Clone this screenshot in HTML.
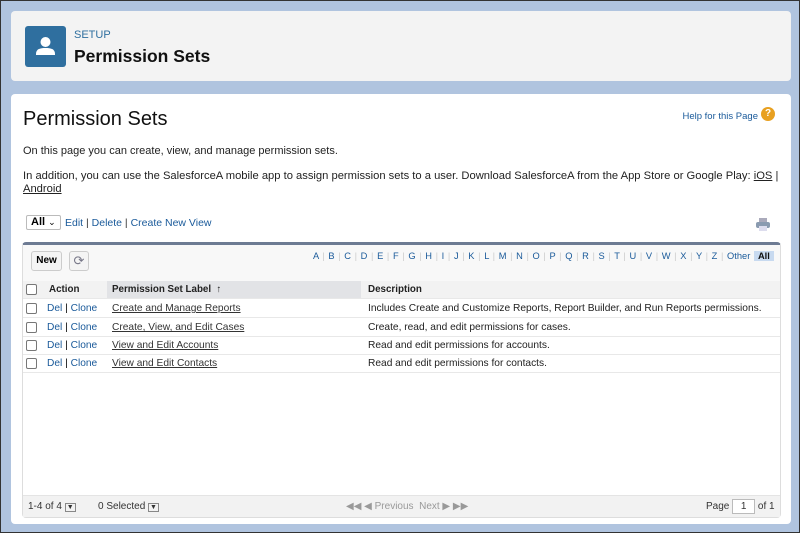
<!DOCTYPE html>
<html><head><style>
*{margin:0;padding:0;box-sizing:border-box}
body{width:800px;height:533px;background:#b0c4df;font-family:"Liberation Sans",Arial,sans-serif;position:relative;overflow:hidden;border:1px solid #333}
a{color:#1a5a9a;text-decoration:none}
.hdr{position:absolute;left:10px;top:10px;width:780px;height:70px;background:#f3f3f3;border-radius:4px}
.ico{position:absolute;left:14px;top:15px;width:41px;height:41px;background:#2f6f9f;border-radius:3px}
.main{position:absolute;left:10px;top:93px;width:780px;height:430px;background:#fff;border-radius:4px}
.t{position:absolute;white-space:nowrap}
.tbl{position:absolute;left:11px;top:148px;width:759px;height:276px;border:1px solid #ddd;border-top:3px solid #6d7b93;border-radius:4px;background:#fff}
.row{position:absolute;left:0;width:757px;height:18px;border-bottom:1px solid #e8e8e8;font-size:10.2px}
.cb{position:absolute;left:3px;width:11px;height:11px;border:1px solid #777;border-radius:2px;background:#fff}
.u{color:#333;text-decoration:underline}
.s{color:#ccc}
</style></head><body>
<div class="hdr">
 <div class="ico"><svg width="41" height="41"><circle cx="20.5" cy="16" r="5" fill="#fff"/><path d="M11 28c0-5 4-6 9.5-6s9.5 1 9.5 6v1H11z" fill="#fff"/></svg></div>
 <div class="t" style="left:63px;top:18px;font-size:11px;color:#2f6f9f">SETUP</div>
 <div class="t" style="left:63px;top:35px;font-size:17.5px;font-weight:bold;color:#111">Permission Sets</div>
</div>
<div class="main">
 <div class="t" style="left:12px;top:14px;font-size:20px;color:#111">Permission Sets</div>
 <div class="t" style="right:33px;top:17px;font-size:9.5px;color:#1a5a9a">Help for this Page</div>
 <div style="position:absolute;left:750px;top:13px;width:14px;height:14px;border-radius:50%;background:#e8a020;color:#fff;font-size:10px;font-weight:bold;text-align:center;line-height:14px">?</div>
 <div class="t" style="left:12px;top:51px;font-size:11px;color:#222">On this page you can create, view, and manage permission sets.</div>
 <div class="t" style="left:12px;top:76px;font-size:11.2px;color:#222">In addition, you can use the SalesforceA mobile app to assign permission sets to a user. Download SalesforceA from the App Store or Google Play: <span style="text-decoration:underline">iOS</span> |</div>
 <div class="t" style="left:12px;top:89px;font-size:11.2px;color:#222;text-decoration:underline">Android</div>
 <div style="position:absolute;left:15px;top:121px;width:35px;height:15px;border:1px solid #bbb;border-radius:2px;font-size:11px;font-weight:bold;padding-left:4px;line-height:13px">All <span style="font-weight:normal;font-size:9px">&#8964;</span></div>
 <div class="t" style="left:54px;top:123px;font-size:10.5px;color:#333"><a>Edit</a> | <a>Delete</a> | <a>Create New View</a></div>
 <svg style="position:absolute;left:744px;top:123px" width="16" height="15"><rect x="4" y="1" width="8" height="4" fill="#aab"/><rect x="1" y="5" width="14" height="6" rx="2" fill="#8a9bb0"/><rect x="4" y="9" width="8" height="5" fill="#dde"/></svg>
 <div class="tbl">
  <div style="position:absolute;left:0;top:0;width:757px;height:36px;background:#f8f8f8"></div>
  <div style="position:absolute;left:8px;top:6px;width:31px;height:20px;border:1px solid #ccc;border-radius:3px;background:#f4f4f4;font-size:10px;font-weight:bold;text-align:center;line-height:18px">New</div>
  <div style="position:absolute;left:46px;top:6px;width:20px;height:20px;border:1px solid #ccc;border-radius:3px;background:#f4f4f4;color:#778;font-size:13px;text-align:center;line-height:18px">&#10227;</div>
  <div class="t" style="left:290px;top:6px;font-size:9.3px;color:#1a5a9a;word-spacing:1.05px">A <span class="s">|</span> B <span class="s">|</span> C <span class="s">|</span> D <span class="s">|</span> E <span class="s">|</span> F <span class="s">|</span> G <span class="s">|</span> H <span class="s">|</span> I <span class="s">|</span> J <span class="s">|</span> K <span class="s">|</span> L <span class="s">|</span> M <span class="s">|</span> N <span class="s">|</span> O <span class="s">|</span> P <span class="s">|</span> Q <span class="s">|</span> R <span class="s">|</span> S <span class="s">|</span> T <span class="s">|</span> U <span class="s">|</span> V <span class="s">|</span> W <span class="s">|</span> X <span class="s">|</span> Y <span class="s">|</span> Z <span class="s">|</span> Other <span style="background:#c8daf0;color:#111;font-weight:bold;padding:0 4px">All</span></div>
  <div class="row" style="top:36px;background:#f2f2f2;font-weight:bold;font-size:9.8px;color:#222">
   <div class="cb" style="top:3px"></div>
   <div class="t" style="left:26px;top:3px">Action</div>
   <div style="position:absolute;left:84px;top:0;width:254px;height:17px;background:#e2e3e6"></div>
   <div class="t" style="left:89px;top:3px">Permission Set Label &nbsp;↑</div>
   <div class="t" style="left:345px;top:3px">Description</div>
  </div>
  <div class="row" style="top:55px"><div class="cb" style="top:3px"></div><div class="t" style="left:24px;top:3px"><a>Del</a> | <a>Clone</a></div><div class="t u" style="left:89px;top:3px">Create and Manage Reports</div><div class="t" style="left:345px;top:3px;color:#222">Includes Create and Customize Reports, Report Builder, and Run Reports permissions.</div></div>
  <div class="row" style="top:74px"><div class="cb" style="top:3px"></div><div class="t" style="left:24px;top:3px"><a>Del</a> | <a>Clone</a></div><div class="t u" style="left:89px;top:3px">Create, View, and Edit Cases</div><div class="t" style="left:345px;top:3px;color:#222">Create, read, and edit permissions for cases.</div></div>
  <div class="row" style="top:92px"><div class="cb" style="top:3px"></div><div class="t" style="left:24px;top:3px"><a>Del</a> | <a>Clone</a></div><div class="t u" style="left:89px;top:3px">View and Edit Accounts</div><div class="t" style="left:345px;top:3px;color:#222">Read and edit permissions for accounts.</div></div>
  <div class="row" style="top:110px"><div class="cb" style="top:3px"></div><div class="t" style="left:24px;top:3px"><a>Del</a> | <a>Clone</a></div><div class="t u" style="left:89px;top:3px">View and Edit Contacts</div><div class="t" style="left:345px;top:3px;color:#222">Read and edit permissions for contacts.</div></div>
  <div style="position:absolute;left:0;top:250px;width:757px;height:22px;background:#f2f2f2;border-top:1px solid #e4e4e4;font-size:10px;color:#333">
   <div class="t" style="left:5px;top:5px">1-4 of 4 <span style="border:1px solid #888;font-size:7px;padding:0 1px">▼</span></div>
   <div class="t" style="left:75px;top:5px">0 Selected <span style="border:1px solid #888;font-size:7px;padding:0 1px">▼</span></div>
   <div class="t" style="left:323px;top:5px;color:#999">◀◀ ◀ Previous &nbsp;Next ▶ ▶▶</div>
   <div class="t" style="left:683px;top:3px">Page <span style="display:inline-block;width:23px;height:15px;border:1px solid #bbb;background:#fff;text-align:center;line-height:13px">1</span> of 1</div>
  </div>
 </div>
</div>
</body></html>
